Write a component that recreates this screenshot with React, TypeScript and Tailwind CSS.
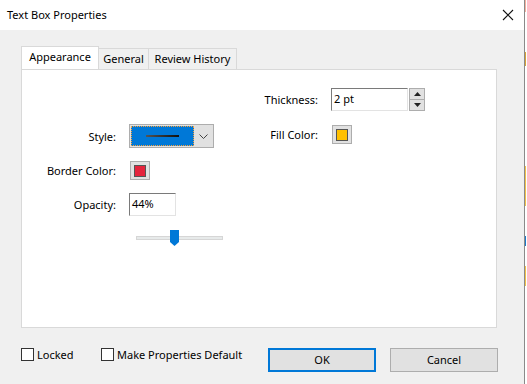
import React from "react"

const font = { fontFamily: '"Segoe UI", "Noto Sans", sans-serif' }

function Swatch({ color }: { color: string }) {
  return (
    <div className="flex h-[19px] w-[20px] items-center justify-center border border-[#adadad] bg-[#e1e1e1]">
      <div className={`h-[12px] w-[12px] border border-[#555] ${color}`} />
    </div>
  )
}

function Label({ children, w }: { children: React.ReactNode; w: string }) {
  return <div className={`${w} whitespace-nowrap text-right text-[11px] leading-none text-black`}>{children}</div>
}

function Spinner() {
  return (
    <div className="ml-[1px] flex h-[23px] w-[16px] flex-col border border-[#adadad] bg-[#e1e1e1]">
      <div className="flex flex-1 items-center justify-center border-b border-[#adadad]">
        <svg width="7" height="4" viewBox="0 0 7 4">
          <path d="M0 4 L3.5 0 L7 4 Z" fill="#222" />
        </svg>
      </div>
      <div className="flex flex-1 items-center justify-center">
        <svg width="7" height="4" viewBox="0 0 7 4">
          <path d="M0 0 L3.5 4 L7 0 Z" fill="#222" />
        </svg>
      </div>
    </div>
  )
}

function Checkbox({ label, w }: { label: string; w: string }) {
  return (
    <div className={`flex items-center gap-[3px] whitespace-nowrap ${w}`}>
      <div className="h-[13px] w-[13px] border border-[#333] bg-white" />
      <span className="text-[11px] leading-none text-black">{label}</span>
    </div>
  )
}

export default function App() {
  return (
    <div className="flex h-[384px] w-[527px] overflow-hidden bg-white" style={font}>
      <div className="flex w-[525px] flex-col border-r border-[#8a8a8a]">
        {/* title bar */}
        <div className="flex h-[30px] items-center justify-between bg-white pl-[7px] pr-[10px]">
          <span className="text-[11px] text-black">Text Box Properties</span>
          <svg width="12" height="12" viewBox="0 0 12 12">
            <path d="M1 1 L11 11 M11 1 L1 11" stroke="#111" strokeWidth="1.1" />
          </svg>
        </div>

        <div className="flex flex-1 flex-col bg-[#f0f0f0] pl-[21px] pr-[27px] pt-[17px]">
          {/* tabs */}
          <div className="flex h-[22px] items-end">
            <div className="relative z-10 flex h-[23px] w-[78px] items-center justify-center border border-b-0 border-[#d9d9d9] bg-white pb-[1px] text-[11px] text-black">
              Appearance
            </div>
            <div className="flex h-[21px] w-[50px] items-center justify-center border border-b-0 border-l-0 border-[#d9d9d9] text-[11px] text-black">
              General
            </div>
            <div className="flex h-[21px] w-[88px] items-center justify-center border border-b-0 border-l-0 border-[#d9d9d9] text-[11px] text-black">
              Review History
            </div>
          </div>

          {/* panel */}
          <div className="flex h-[259px] border border-[#d9d9d9] bg-white">
            <div className="flex w-[228px] flex-col pt-[54px]">
              <div className="flex h-[24px] items-center gap-[13px]">
                <Label w="w-[94px]">Style:</Label>
                <div className="flex h-[24px] w-[85px] items-center border border-[#adadad] bg-[#e1e1e1] p-[1px]">
                  <div className="flex h-full w-[63px] items-center justify-center border border-dotted border-[#f7a13a] bg-[#0078d7]">
                    <div className="h-[2px] w-[33px] bg-gradient-to-r from-[#555] to-[#111]" />
                  </div>
                  <div className="flex flex-1 items-center justify-center">
                    <svg width="9" height="5" viewBox="0 0 9 5">
                      <path d="M0.5 0.5 L4.5 4.5 L8.5 0.5" stroke="#444" fill="none" strokeWidth="1" />
                    </svg>
                  </div>
                </div>
              </div>
              <div className="mt-[13px] flex h-[19px] items-center gap-[14px]">
                <Label w="w-[94px]">Border Color:</Label>
                <Swatch color="bg-[#e4233c]" />
              </div>
              <div className="mt-[13px] flex h-[23px] items-center gap-[13px]">
                <Label w="w-[94px]">Opacity:</Label>
                <div className="flex h-[23px] w-[47px] items-center border border-b-[#e3e3e3] border-l-[#7a7a7a] border-r-[#e3e3e3] border-t-[#7a7a7a] bg-white pl-[2px] text-[11px] text-black">
                  44%
                </div>
              </div>
              <div className="mt-[14px] flex h-[16px] items-center pl-[114px]">
                <div className="relative h-[4px] w-[87px] border border-[#d6d6d6] bg-[#e7eaea]">
                  <svg className="absolute left-[33px] top-[-7px]" width="9" height="16" viewBox="0 0 9 16">
                    <path d="M0 0 H9 V12 L4.5 16 L0 12 Z" fill="#0078d7" />
                  </svg>
                </div>
              </div>
            </div>

            <div className="flex flex-col pt-[18px]">
              <div className="flex h-[23px] items-center gap-[13px]">
                <Label w="w-[68px]">Thickness:</Label>
                <div className="flex items-center">
                  <div className="flex h-[23px] w-[77px] items-center border border-b-[#e3e3e3] border-l-[#7a7a7a] border-r-[#e3e3e3] border-t-[#7a7a7a] bg-white pl-[2px] text-[11px] text-black">
                    2 pt
                  </div>
                  <Spinner />
                </div>
              </div>
              <div className="mt-[14px] flex h-[19px] items-center gap-[14px]">
                <Label w="w-[68px]">Fill Color:</Label>
                <Swatch color="bg-[#ffc000]" />
              </div>
            </div>
          </div>

          {/* bottom */}
          <div className="-mr-[1px] mt-[20px] flex items-start">
            <div className="flex">
              <Checkbox label="Locked" w="w-[80px]" />
              <Checkbox label="Make Properties Default" w="" />
            </div>
            <div className="ml-auto flex gap-[14px]">
              <div className="flex h-[24px] w-[108px] items-center justify-center border-2 border-[#0078d7] bg-[#e1e1e1] text-[11px] text-black">
                OK
              </div>
              <div className="flex h-[24px] w-[108px] items-center justify-center border border-[#adadad] bg-[#e1e1e1] text-[11px] text-black">
                Cancel
              </div>
            </div>
          </div>
        </div>
      </div>
      <div className="flex w-[1px] flex-col bg-white">
        <div className="h-[12px] bg-[#f5b0a0]" />
        <div className="mt-[40px] h-[14px] bg-[#d9a23a]" />
        <div className="mt-[100px] h-[40px] bg-[#f3c04a]" />
        <div className="mt-[30px] h-[10px] bg-[#1f78c8]" />
        <div className="mt-[20px] h-[20px] bg-[#f3c04a]" />
      </div>
    </div>
  )
}
